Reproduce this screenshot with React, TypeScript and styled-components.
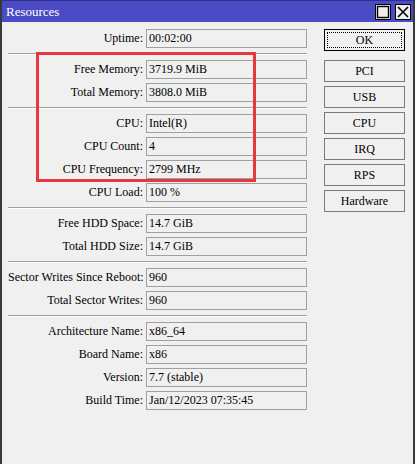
import React from "react";
import styled, { createGlobalStyle } from "styled-components";

interface Field {
  label: string;
  value: string;
}

const groups: Field[][] = [
  [{ label: "Uptime:", value: "00:02:00" }],
  [
    { label: "Free Memory:", value: "3719.9 MiB" },
    { label: "Total Memory:", value: "3808.0 MiB" },
  ],
  [
    { label: "CPU:", value: "Intel(R)" },
    { label: "CPU Count:", value: "4" },
    { label: "CPU Frequency:", value: "2799 MHz" },
    { label: "CPU Load:", value: "100 %" },
  ],
  [
    { label: "Free HDD Space:", value: "14.7 GiB" },
    { label: "Total HDD Size:", value: "14.7 GiB" },
  ],
  [
    { label: "Sector Writes Since Reboot:", value: "960" },
    { label: "Total Sector Writes:", value: "960" },
  ],
  [
    { label: "Architecture Name:", value: "x86_64" },
    { label: "Board Name:", value: "x86" },
    { label: "Version:", value: "7.7 (stable)" },
    { label: "Build Time:", value: "Jan/12/2023 07:35:45" },
  ],
];

const sideButtons = ["PCI", "USB", "CPU", "IRQ", "RPS", "Hardware"];

const GlobalStyle = createGlobalStyle`
  body {
    margin: 0;
    background: #ffffff;
    font-family: "Liberation Serif", "Times New Roman", serif;
  }
`;

const App: React.FC = () => {
  return (
    <>
      <GlobalStyle />
      <Window>
        <TitleBar>
          <Title>Resources</Title>
          <TitleButtons>
            <TitleButton aria-label="Maximize">
              <svg width="14" height="14" viewBox="0 0 14 14">
                <rect x="1.5" y="1.5" width="11" height="11" fill="none" stroke="#000" strokeWidth="1.4" />
              </svg>
            </TitleButton>
            <TitleButton aria-label="Close">
              <svg width="14" height="14" viewBox="0 0 14 14">
                <path d="M2 2 L12 12 M12 2 L2 12" stroke="#000" strokeWidth="1.6" />
              </svg>
            </TitleButton>
          </TitleButtons>
        </TitleBar>

        <Body>
          <Form>
            {groups.map((group, groupIndex) => (
              <React.Fragment key={groupIndex}>
                {groupIndex > 0 && <Separator />}
                <Group>
                  {group.map((field) => (
                    <Row key={field.label}>
                      <Label>{field.label}</Label>
                      <Value>{field.value}</Value>
                    </Row>
                  ))}
                </Group>
              </React.Fragment>
            ))}
          </Form>

          <Buttons>
            <Button isDefault>
              <Focus>OK</Focus>
            </Button>
            <ButtonStack>
              {sideButtons.map((name) => (
                <Button key={name}>{name}</Button>
              ))}
            </ButtonStack>
          </Buttons>

          <Highlight />
        </Body>
      </Window>
    </>
  );
};

const Window = styled.div`
  position: relative;
  width: 411px;
  height: 464px;
  background: #f0f0f0;
  border-left: 2px solid #3a3a3a;
  border-right: 2px solid #3a3a3a;
  box-sizing: content-box;
`;

const TitleBar = styled.div`
  display: flex;
  align-items: center;
  justify-content: space-between;
  height: 22px;
  background: #4b4bc6;
  border-top: 1px solid #2e2e8a;
  box-sizing: border-box;
  padding: 0 2px 0 4px;
`;

const Title = styled.span`
  color: #ffffff;
  font-size: 13px;
  line-height: 1;
`;

const TitleButtons = styled.div`
  display: flex;
  gap: 4px;
`;

const TitleButton = styled.div`
  display: flex;
  align-items: center;
  justify-content: center;
  width: 16px;
  height: 16px;
  background: #eeeeee;
  border: 1px solid #000;
  box-sizing: border-box;
`;

const Body = styled.div`
  position: relative;
  display: flex;
  align-items: flex-start;
  padding: 7px 0 0 6px;
`;

const Form = styled.div`
  display: flex;
  flex-direction: column;
  width: 299px;
`;

const Group = styled.div`
  display: flex;
  flex-direction: column;
  gap: 4px;
`;

const Separator = styled.div`
  height: 1px;
  margin: 5px 0 5px;
  background: #a0a0a0;
  border-bottom: 1px solid #ffffff;
`;

const Row = styled.div`
  display: grid;
  grid-template-columns: 135px 161px;
  column-gap: 3px;
  align-items: center;
  height: 19px;
`;

const Label = styled.span`
  font-size: 12px;
  color: #000;
  text-align: right;
  white-space: nowrap;
`;

const Value = styled.div`
  height: 19px;
  box-sizing: border-box;
  border: 1px solid #a0a0a0;
  padding: 0 2px;
  font-size: 12px;
  line-height: 17px;
  color: #000;
  white-space: nowrap;
`;

const Buttons = styled.div`
  display: flex;
  flex-direction: column;
  gap: 9px;
  margin-left: 17px;
  width: 81px;
`;

const ButtonStack = styled.div`
  display: flex;
  flex-direction: column;
  gap: 4px;
`;

const Button = styled.div<{ isDefault?: boolean }>`
  display: flex;
  align-items: center;
  justify-content: center;
  height: 22px;
  box-sizing: border-box;
  border: 1px solid ${(props) => (props.isDefault ? "#000" : "#7a7a7a")};
  padding: ${(props) => (props.isDefault ? "2px" : "0")};
  font-size: 12px;
  color: #000;
  background: #f0f0f0;
`;

const Focus = styled.span`
  display: flex;
  align-items: center;
  justify-content: center;
  width: 100%;
  height: 100%;
  border: 1px dotted #000;
  box-sizing: border-box;
`;

const Highlight = styled.div`
  position: absolute;
  left: 34px;
  top: 30px;
  width: 220px;
  height: 130px;
  box-sizing: border-box;
  border: 3px solid #e5393d;
  pointer-events: none;
`;

export default App;
